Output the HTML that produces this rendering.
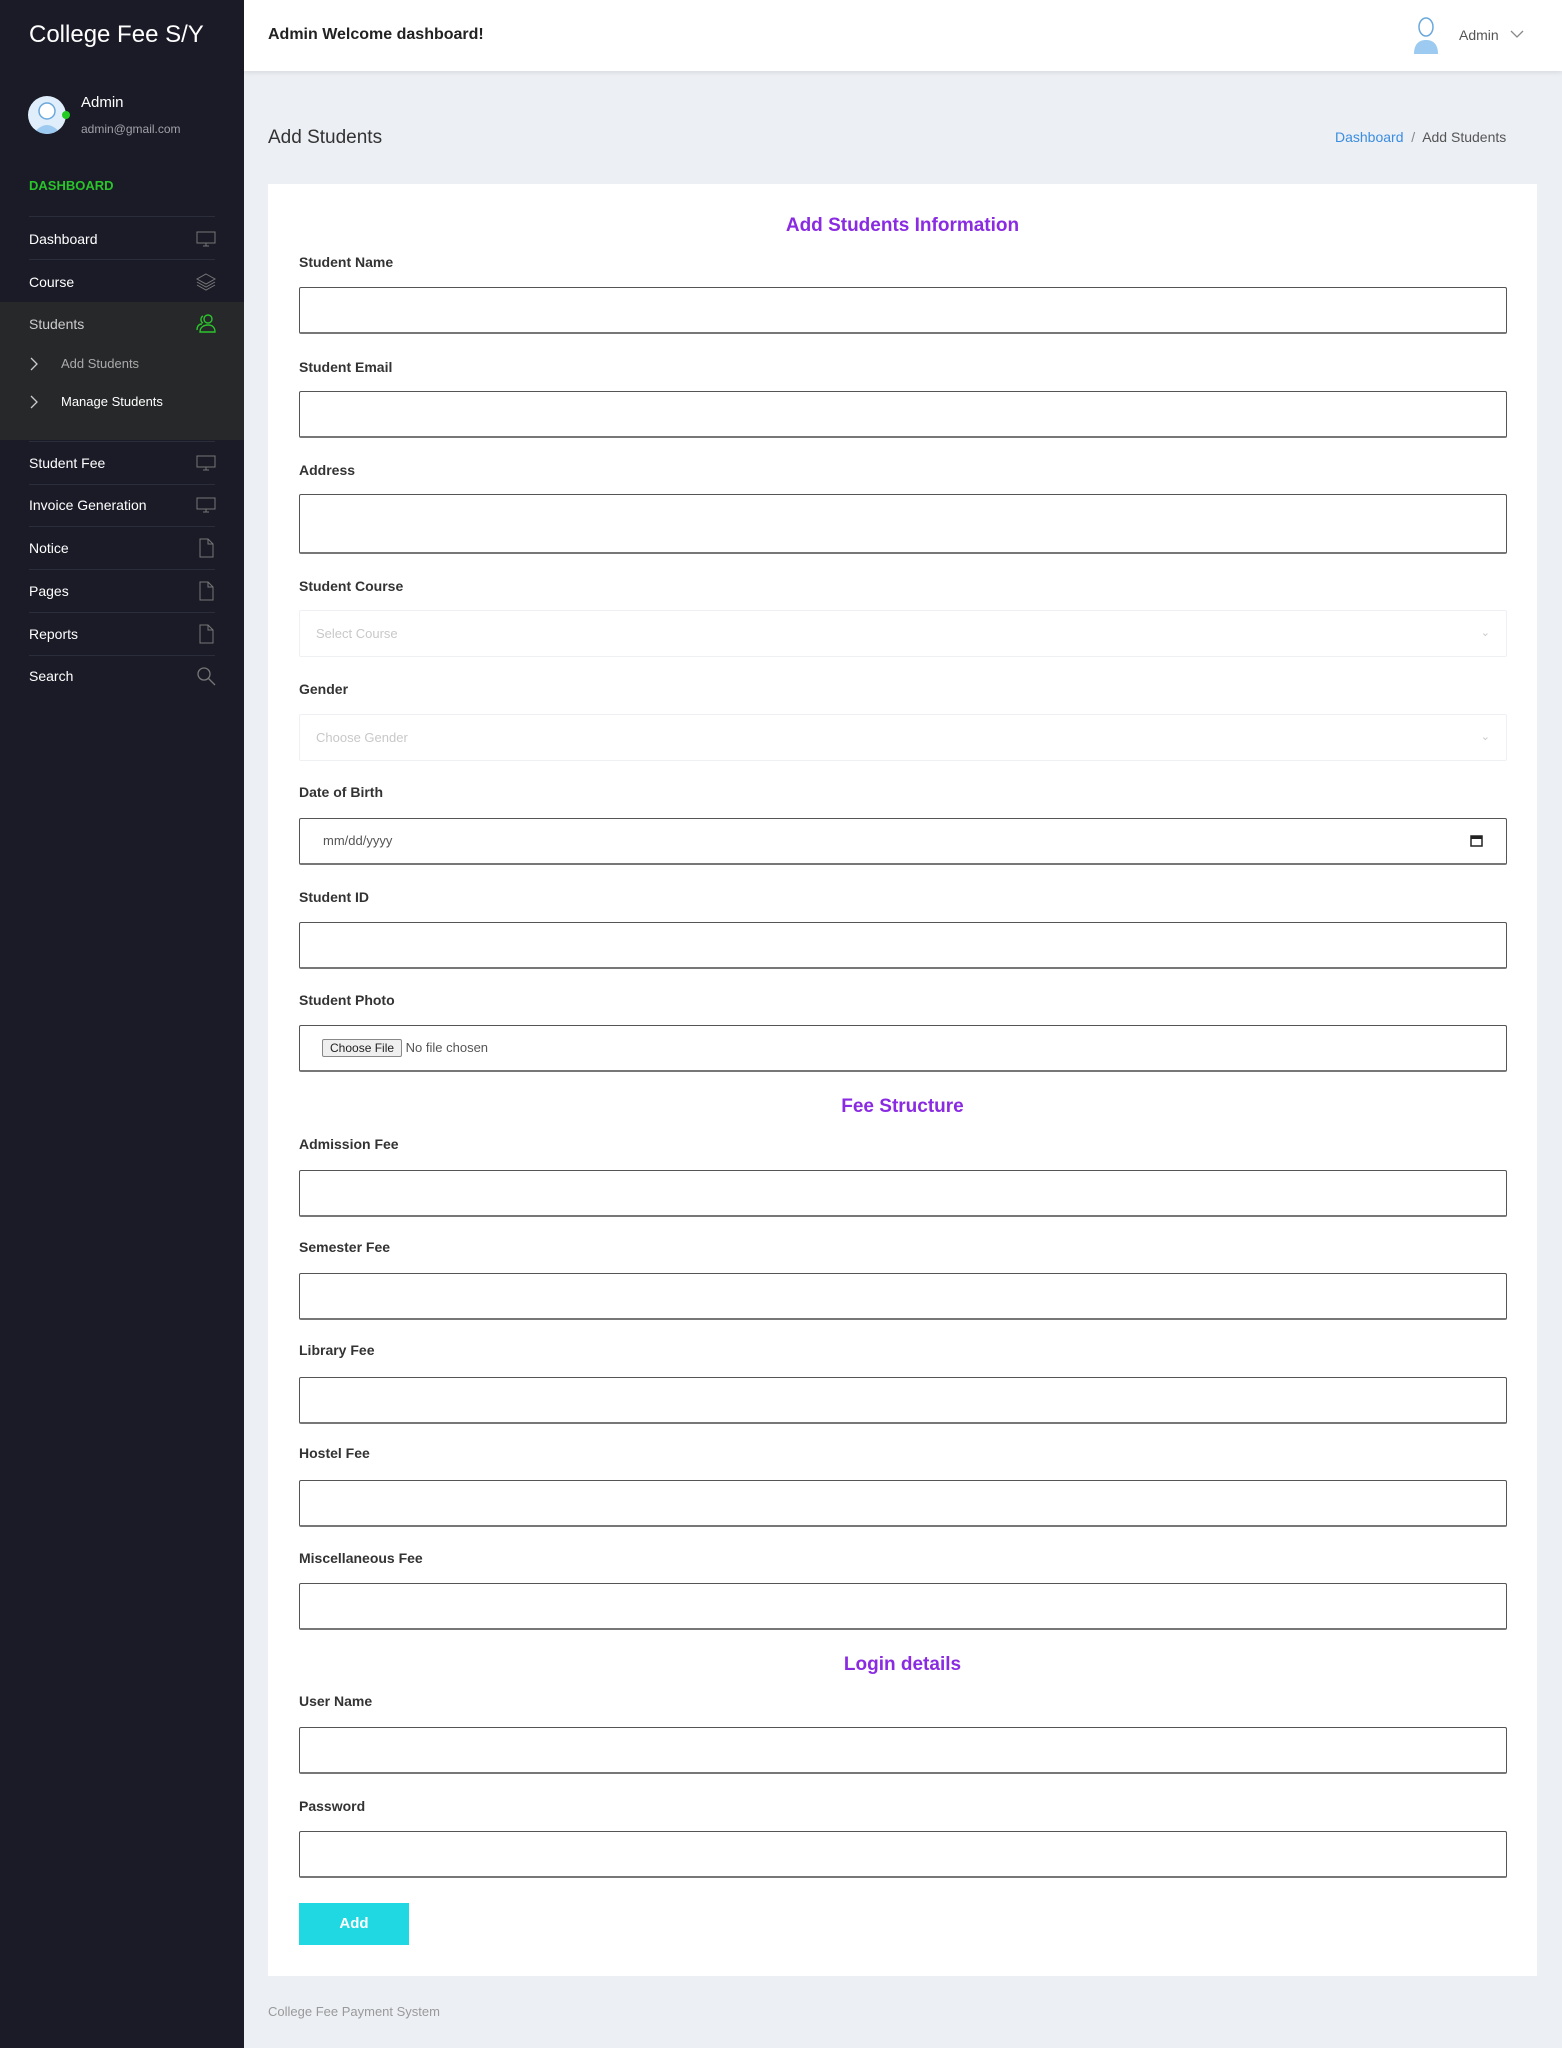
<!DOCTYPE html>
<html><head><meta charset="utf-8"><style>
*{box-sizing:border-box;margin:0;padding:0}
body{width:1562px;height:2048px;background:#eceff4;font-family:"Liberation Sans",sans-serif;position:relative;overflow:hidden}
.side{position:absolute;left:0;top:0;width:244px;height:2048px;background:#1a1b27;color:#fff}
.a{position:absolute}
.top{position:absolute;left:244px;top:0;width:1318px;height:71px;background:#fff;box-shadow:0 2px 4px rgba(0,0,0,.08)}
.card{position:absolute;left:268px;top:184px;width:1269px;height:1792px;background:#fff}
.lbl{position:absolute;left:299px;font-size:14px;font-weight:bold;color:#333;margin-top:2px}
.in{position:absolute;left:299px;width:1208px;height:47px;border:1px solid #555;border-bottom:2px solid #777;border-radius:2px;background:#fff}
.sel{border:1px solid #eef0f4;color:#c8c8c8;font-size:13px;padding:15px 16px}
.h{position:absolute;left:268px;width:1269px;text-align:center;color:#8a2be2;font-weight:bold;font-size:19px;margin-top:2px}
.mi{position:absolute;left:29px;font-size:14px;color:#fff;margin-top:2px}
.ln{position:absolute;left:29px;width:186px;height:1px;background:#2c2d3a}
.ic{position:absolute;left:196px;width:20px;height:20px}
</style></head><body>
<div class="side">
<div class="a" style="left:29px;top:21px;font-size:24px">College Fee S/Y</div>
<div class="a" style="left:28px;top:96px;width:38px;height:38px;border-radius:50%;background:#dfeefa;overflow:hidden"><svg width="38" height="38"><circle cx="19" cy="15" r="8" fill="#fff" stroke="#6aa8dc" stroke-width="1.5"/><path d="M5 38 Q19 20 33 38Z" fill="#9ccaf0"/></svg></div>
<div class="a" style="left:62px;top:111px;width:8px;height:8px;border-radius:50%;background:#22cc22"></div>
<div class="a" style="left:81px;top:94px;font-size:15px">Admin</div>
<div class="a" style="left:81px;top:122px;font-size:12px;color:#a0a0a8">admin@gmail.com</div>
<div class="a" style="left:29px;top:178px;font-size:13px;font-weight:bold;color:#29c42a">DASHBOARD</div>
<div class="ln" style="top:216px"></div>
<div class="mi" style="top:229px">Dashboard</div>
<svg class="ic" style="top:229px" viewBox="0 0 20 20" fill="none" stroke="#777"><rect x="1" y="3" width="18" height="11"/><path d="M7 17h6M10 14v3"/></svg>
<div class="ln" style="top:259px"></div>
<div class="mi" style="top:272px">Course</div>
<svg class="ic" style="top:272px" viewBox="0 0 20 20" fill="none" stroke="#777"><path d="M10 2 19 7 10 12 1 7Z M1 10l9 5 9-5M1 13l9 5 9-5"/></svg>
<div class="a" style="left:0;top:302px;width:244px;height:138px;background:#27282a"></div>
<div class="mi" style="top:314px;color:#ccc">Students</div>
<svg class="ic" style="top:313px" viewBox="0 0 20 20" fill="none" stroke="#2bc42b" stroke-width="1.4"><circle cx="12" cy="6" r="4"/><path d="M4 19c0-5 4-7 8-7s7 2 7 7z"/><path d="M7 3a4 4 0 0 0 0 7M1 17c0-4 2-6 5-6"/></svg>
<svg class="a" style="left:29px;top:357px" width="10" height="14"><path d="M2 1l6 6-6 6" fill="none" stroke="#ccc" stroke-width="1.3"/></svg>
<div class="a" style="left:61px;top:356px;font-size:13px;color:#aaa">Add Students</div>
<svg class="a" style="left:29px;top:395px" width="10" height="14"><path d="M2 1l6 6-6 6" fill="none" stroke="#ccc" stroke-width="1.3"/></svg>
<div class="a" style="left:61px;top:394px;font-size:13px;color:#fff">Manage Students</div>
<div class="ln" style="top:441px"></div>
<div class="mi" style="top:453px">Student Fee</div>
<svg class="ic" style="top:453px" viewBox="0 0 20 20" fill="none" stroke="#777"><rect x="1" y="3" width="18" height="11"/><path d="M7 17h6M10 14v3"/></svg>
<div class="ln" style="top:484px"></div>
<div class="mi" style="top:495px">Invoice Generation</div>
<svg class="ic" style="top:495px" viewBox="0 0 20 20" fill="none" stroke="#777"><rect x="1" y="3" width="18" height="11"/><path d="M7 17h6M10 14v3"/></svg>
<div class="ln" style="top:526px"></div>
<div class="mi" style="top:538px">Notice</div>
<svg class="ic" style="top:538px" viewBox="0 0 20 20" fill="none" stroke="#777"><path d="M4 1h8l5 5v13H4zM12 1v5h5"/></svg>
<div class="ln" style="top:569px"></div>
<div class="mi" style="top:581px">Pages</div>
<svg class="ic" style="top:581px" viewBox="0 0 20 20" fill="none" stroke="#777"><path d="M4 1h8l5 5v13H4zM12 1v5h5"/></svg>
<div class="ln" style="top:612px"></div>
<div class="mi" style="top:624px">Reports</div>
<svg class="ic" style="top:624px" viewBox="0 0 20 20" fill="none" stroke="#777"><path d="M4 1h8l5 5v13H4zM12 1v5h5"/></svg>
<div class="ln" style="top:655px"></div>
<div class="mi" style="top:666px">Search</div>
<svg class="ic" style="top:666px" viewBox="0 0 20 20" fill="none" stroke="#777" stroke-width="1.3"><circle cx="8" cy="8" r="6"/><path d="M12.5 12.5 19 19"/></svg>
</div>
<div class="top">
<div class="a" style="left:24px;top:26px;font-size:16px;font-weight:bold;color:#222">Admin Welcome dashboard!</div>
<svg class="a" style="left:1167px;top:16px" width="30" height="38" viewBox="0 0 30 38"><ellipse cx="15" cy="11" rx="7" ry="9" fill="#fff" stroke="#6aa8dc" stroke-width="1.5"/><path d="M3 38c0-10 5-14 12-14s12 4 12 14z" fill="#9ccaf0"/></svg>
<div class="a" style="left:1215px;top:27px;font-size:14px;color:#555">Admin</div>
<svg class="a" style="left:1266px;top:29px" width="14" height="10"><path d="M1 2l6 6 6-6" fill="none" stroke="#888" stroke-width="1.3"/></svg>
</div>
<div class="a" style="left:268px;top:127px;font-size:19px;color:#333">Add Students</div>
<div class="a" style="left:1335px;top:129px;font-size:14px;color:#3a8de0">Dashboard <span style="color:#888">&nbsp;/&nbsp;</span> <span style="color:#555">Add Students</span></div>
<div class="card"></div>
<div class="h" style="top:213px">Add Students Information</div>
<div class="lbl" style="top:252px">Student Name</div><div class="in" style="top:287px"></div>
<div class="lbl" style="top:357px">Student Email</div><div class="in" style="top:391px"></div>
<div class="lbl" style="top:460px">Address</div><div class="in" style="top:494px;height:60px"></div>
<div class="lbl" style="top:576px">Student Course</div><div class="in sel" style="top:610px">Select Course<span style="float:right;font-size:11px">⌄</span></div>
<div class="lbl" style="top:679px">Gender</div><div class="in sel" style="top:714px">Choose Gender<span style="float:right;font-size:11px">⌄</span></div>
<div class="lbl" style="top:782px">Date of Birth</div><div class="in" style="top:818px;font-size:13px;color:#555;padding:14px 23px">mm/dd/yyyy<svg style="float:right;margin-top:1px" width="13" height="13"><rect x="1" y="2" width="11" height="10" fill="none" stroke="#222" stroke-width="1.5"/><rect x="1" y="2" width="11" height="3" fill="#222"/></svg></div>
<div class="lbl" style="top:887px">Student ID</div><div class="in" style="top:922px"></div>
<div class="lbl" style="top:990px">Student Photo</div><div class="in" style="top:1025px;padding:13px 22px;font-size:13px;color:#555"><span style="display:inline-block;border:1px solid #888;background:#efefef;border-radius:2px;padding:1px 7px;color:#222;font-size:12px">Choose File</span> No file chosen</div>
<div class="h" style="top:1094px">Fee Structure</div>
<div class="lbl" style="top:1134px">Admission Fee</div><div class="in" style="top:1170px"></div>
<div class="lbl" style="top:1237px">Semester Fee</div><div class="in" style="top:1273px"></div>
<div class="lbl" style="top:1340px">Library Fee</div><div class="in" style="top:1377px"></div>
<div class="lbl" style="top:1443px">Hostel Fee</div><div class="in" style="top:1480px"></div>
<div class="lbl" style="top:1548px">Miscellaneous Fee</div><div class="in" style="top:1583px"></div>
<div class="h" style="top:1652px">Login details</div>
<div class="lbl" style="top:1691px">User Name</div><div class="in" style="top:1727px"></div>
<div class="lbl" style="top:1796px">Password</div><div class="in" style="top:1831px"></div>
<div class="a" style="left:299px;top:1903px;width:110px;height:42px;background:#1fd8e2;color:#fff;font-weight:bold;font-size:15px;text-align:center;line-height:42px">Add</div>
<div class="a" style="left:268px;top:2004px;font-size:13px;color:#999">College Fee Payment System</div>
</body></html>
